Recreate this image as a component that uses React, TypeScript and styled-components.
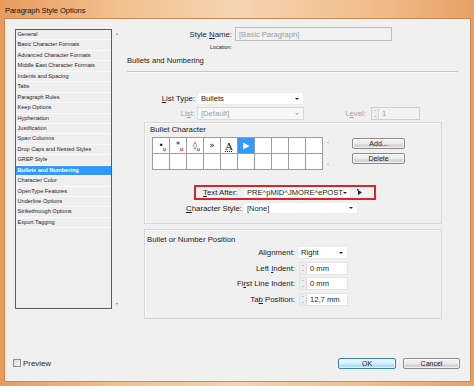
import styled, { createGlobalStyle } from "styled-components";

const GlobalStyle = createGlobalStyle`
  html, body {
    margin: 0;
    padding: 0;
  }
  body {
    width: 474px;
    height: 386px;
    overflow: hidden;
    background: #eaa56b;
    font-family: "Liberation Sans", Arial, sans-serif;
    color: #1c1c1c;
  }
`;

const Window = styled.div`
  width: 474px;
  height: 386px;
  box-sizing: border-box;
  padding: 0 4px 5px 5px;
  display: flex;
  flex-direction: column;
  background: linear-gradient(90deg, #e79c5c 0%, #f1c08f 25%, #f6d4b0 50%, #f0bd8c 78%, #e8a163 100%);
`;

const TitleBar = styled.div`
  height: 19px;
  flex-shrink: 0;
  display: flex;
  align-items: center;
  padding-top: 2px;
  box-sizing: border-box;
  font-size: 7.6px;
  letter-spacing: -0.1px;
  color: #141414;
`;

const Client = styled.div`
  flex: 1;
  display: flex;
  flex-direction: column;
  background: #f0f0f0;
  box-shadow: 0 0 0 1px #c98a55;
`;

const Main = styled.div`
  flex: 1;
  display: flex;
`;

const Sidebar = styled.div`
  width: 120px;
  flex-shrink: 0;
  display: flex;
  align-items: flex-start;
  padding: 10px 0 0 10px;
  box-sizing: border-box;
`;

const ListBox = styled.div`
  width: 97px;
  height: 280px;
  box-sizing: border-box;
  border: 1px solid #5c5c5c;
  background: #efefef;
  overflow: hidden;
`;

const ListItem = styled.div<{ $selected?: boolean }>`
  height: 10.44px;
  box-sizing: border-box;
  border-bottom: 1px solid #fafafa;
  padding-left: 1.5px;
  font-size: 5.6px;
  line-height: 9.6px;
  white-space: nowrap;
  background: ${(p) => (p.$selected ? "#3399ff" : "transparent")};
  color: ${(p) => (p.$selected ? "#ffffff" : "#222")};
  font-weight: ${(p) => (p.$selected ? 700 : 400)};
`;

const ScrollCol = styled.div<{ $h: number; $pad: number }>`
  width: 10px;
  height: ${(p) => p.$h}px;
  box-sizing: border-box;
  padding: ${(p) => p.$pad}px 0;
  display: flex;
  flex-direction: column;
  align-items: center;
  justify-content: space-between;
`;

const Tri = styled.span<{ $dir: "up" | "down"; $color?: string; $size?: number }>`
  width: 0;
  height: 0;
  border-left: ${(p) => p.$size ?? 2}px solid transparent;
  border-right: ${(p) => p.$size ?? 2}px solid transparent;
  ${(p) =>
    p.$dir === "up"
      ? `border-bottom: ${(p.$size ?? 2) + 0.5}px solid ${p.$color ?? "#8a8a8a"};`
      : `border-top: ${(p.$size ?? 2) + 0.5}px solid ${p.$color ?? "#8a8a8a"};`}
`;

const Content = styled.div`
  flex: 1;
  display: flex;
  flex-direction: column;
  padding-top: 8px;
`;

const Row = styled.div<{ $top?: number; $h?: number; $left?: number }>`
  display: flex;
  align-items: center;
  flex-shrink: 0;
  margin-top: ${(p) => p.$top ?? 0}px;
  margin-left: ${(p) => p.$left ?? 0}px;
  height: ${(p) => p.$h ?? 13}px;
`;

const Label = styled.span<{ $w: number; $size?: number; $disabled?: boolean; $gap?: number }>`
  width: ${(p) => p.$w}px;
  flex-shrink: 0;
  box-sizing: border-box;
  padding-right: ${(p) => p.$gap ?? 2}px;
  text-align: right;
  white-space: nowrap;
  font-size: ${(p) => p.$size ?? 7.8}px;
  color: ${(p) => (p.$disabled ? "#a3a3a3" : "#1c1c1c")};
`;

const Field = styled.div<{ $w: number; $kind?: "plain" | "white" | "disabled" }>`
  width: ${(p) => p.$w}px;
  height: 100%;
  flex-shrink: 0;
  box-sizing: border-box;
  display: flex;
  align-items: center;
  justify-content: space-between;
  padding: 0 4px 0 3px;
  font-size: 7.6px;
  white-space: nowrap;
  overflow: hidden;
  background: ${(p) => (p.$kind === "plain" ? "#f1f1f1" : p.$kind === "disabled" ? "#f7f7f7" : "#ffffff")};
  border: 1px solid ${(p) => (p.$kind === "plain" ? "#bdbdbd" : p.$kind === "disabled" ? "#dadada" : "#ececec")};
  color: ${(p) => (p.$kind === "white" || !p.$kind ? "#1c1c1c" : "#9d9d9d")};
`;

const Spinner = styled.div<{ $w: number; $left?: number; $disabled?: boolean }>`
  width: ${(p) => p.$w}px;
  height: 100%;
  margin-left: ${(p) => p.$left ?? 0}px;
  flex-shrink: 0;
  box-sizing: border-box;
  display: flex;
  border: 1px solid ${(p) => (p.$disabled ? "#cfcfcf" : "#e4e4e4")};
  background: ${(p) => (p.$disabled ? "#f3f3f3" : "#ffffff")};
  font-size: 7.6px;
  color: ${(p) => (p.$disabled ? "#9d9d9d" : "#1c1c1c")};
`;

const SpinArrows = styled.div`
  width: 6px;
  flex-shrink: 0;
  display: flex;
  flex-direction: column;
  align-items: center;
  justify-content: space-around;
  background: #ededed;
  border-right: 1px solid #d8d8d8;
`;

const SpinValue = styled.span`
  display: flex;
  align-items: center;
  padding-left: 3px;
`;

const Heading = styled.div`
  margin: 6px 0 0 2px;
  height: 10px;
  line-height: 10px;
  font-size: 7.6px;
`;

const Separator = styled.div`
  margin: 5px 0 0 2px;
  width: 331px;
  height: 1px;
  background: #c4c4c4;
  border-bottom: 1px solid #fbfbfb;
`;

const Group = styled.div<{ $top: number; $h: number }>`
  margin: ${(p) => p.$top}px 0 0 19px;
  width: 298px;
  height: ${(p) => p.$h}px;
  box-sizing: border-box;
  border: 1px solid #d7d7d7;
  box-shadow: inset 1px 1px 0 #fafafa;
  display: flex;
  flex-direction: column;
`;

const GroupTitle = styled.div<{ $left: number; $top: number }>`
  margin: ${(p) => p.$top}px 0 0 ${(p) => p.$left}px;
  height: 9px;
  line-height: 9px;
  font-size: 7.8px;
`;

const GlyphGrid = styled.div`
  display: grid;
  grid-template-columns: repeat(10, 16px);
  grid-template-rows: repeat(2, 15px);
  gap: 1px;
  padding: 1px;
  background: #9c9c9c;
  margin-left: 7px;
`;

const Cell = styled.div<{ $selected?: boolean }>`
  position: relative;
  display: flex;
  align-items: center;
  justify-content: center;
  background: ${(p) => (p.$selected ? "#3399ff" : "#ffffff")};
  font-family: "DejaVu Sans", sans-serif;
  font-size: 8px;
  color: #111;
`;

const CellSerif = styled.span`
  font-family: "Liberation Serif", serif;
  font-size: 11px;
  text-decoration: underline dotted;
`;

const RedMark = styled.span`
  position: absolute;
  left: 10px;
  top: 8px;
  font-family: "Liberation Sans", sans-serif;
  font-size: 5px;
  font-weight: 700;
  color: #d8262c;
`;

const SideButtons = styled.div`
  display: flex;
  flex-direction: column;
  gap: 4px;
  margin-left: 19px;
  align-self: flex-start;
  padding-top: 0.7px;
`;

const Button = styled.div<{ $w: number; $primary?: boolean }>`
  width: ${(p) => p.$w}px;
  height: 11px;
  box-sizing: border-box;
  display: flex;
  align-items: center;
  justify-content: center;
  font-size: 7px;
  color: #1a1a1a;
  border-radius: 2px;
  border: 1px solid ${(p) => (p.$primary ? "#3c7fb1" : "#8a8a8a")};
  background: ${(p) =>
    p.$primary
      ? "linear-gradient(180deg, #eaf6fd 0%, #d9f0fc 50%, #bee6fd 51%, #a7d9f5 100%)"
      : "linear-gradient(180deg, #f3f3f3 0%, #ebebeb 50%, #dddddd 51%, #cfcfcf 100%)"};
  box-shadow: inset 0 0 0 1px rgba(255, 255, 255, 0.7);
`;

const RedBox = styled.div`
  margin: 15px 0 0 49px;
  width: 182px;
  height: 15px;
  box-sizing: border-box;
  border: 2px solid #d4262d;
  display: flex;
  align-items: center;
  padding-left: 7px;
`;

const InlineLabel = styled.span`
  width: 40px;
  flex-shrink: 0;
  font-size: 7.8px;
  white-space: nowrap;
`;

const Flyout = styled.svg`
  margin-left: 6px;
  flex-shrink: 0;
`;

const Footer = styled.div`
  height: 31px;
  box-sizing: border-box;
  padding: 0 10px 5px 8px;
  display: flex;
  align-items: center;
  justify-content: space-between;
`;

const Check = styled.label`
  display: flex;
  align-items: center;
  gap: 2px;
  font-size: 7.9px;
  color: #2a2a2a;
`;

const Box = styled.span`
  width: 8px;
  height: 8px;
  box-sizing: border-box;
  border: 1px solid #8f8f8f;
  background: linear-gradient(135deg, #d9d9d9, #f7f7f7);
`;

const Actions = styled.div`
  display: flex;
  gap: 7px;
`;

const sections = [
  "General",
  "Basic Character Formats",
  "Advanced Character Formats",
  "Middle East Character Formats",
  "Indents and Spacing",
  "Tabs",
  "Paragraph Rules",
  "Keep Options",
  "Hyphenation",
  "Justification",
  "Span Columns",
  "Drop Caps and Nested Styles",
  "GREP Style",
  "Bullets and Numbering",
  "Character Color",
  "OpenType Features",
  "Underline Options",
  "Strikethrough Options",
  "Export Tagging",
];

const glyphs: { ch?: string; mark?: boolean; serif?: boolean; selected?: boolean }[] = [
  { ch: "•", mark: true },
  { ch: "*", mark: true },
  { ch: "◊", mark: true },
  { ch: "»" },
  { ch: "A", serif: true },
  { selected: true },
];

function Spin({ value, w, left, disabled }: { value: string; w: number; left?: number; disabled?: boolean }) {
  return (
    <Spinner $w={w} $left={left} $disabled={disabled}>
      <SpinArrows>
        <Tri $dir="up" $size={1.3} $color="#9a9a9a" />
        <Tri $dir="down" $size={1.3} $color="#9a9a9a" />
      </SpinArrows>
      <SpinValue>{value}</SpinValue>
    </Spinner>
  );
}

export default function App() {
  return (
    <>
      <GlobalStyle />
      <Window>
        <TitleBar>Paragraph Style Options</TitleBar>
        <Client>
          <Main>
            <Sidebar>
              <ListBox>
                {sections.map((s) => (
                  <ListItem key={s} $selected={s === "Bullets and Numbering"}>
                    {s}
                  </ListItem>
                ))}
              </ListBox>
              <ScrollCol $h={280} $pad={4}>
                <Tri $dir="up" $size={1.5} />
                <Tri $dir="down" $size={1.5} />
              </ScrollCol>
            </Sidebar>

            <Content>
              <Row $h={14}>
                <Label $w={110} $gap={3}>
                  Style <u>N</u>ame:
                </Label>
                <Field $w={157} $kind="plain">[Basic Paragraph]</Field>
              </Row>
              <Row $top={3} $h={6}>
                <Label $w={107} $size={5.4} $gap={0}>
                  Location:
                </Label>
              </Row>
              <Heading>Bullets and Numbering</Heading>
              <Separator />

              <Row $top={19}>
                <Label $w={72}>
                  <u>L</u>ist Type:
                </Label>
                <Field $w={107}>
                  Bullets
                  <Tri $dir="down" $color="#222" />
                </Field>
              </Row>
              <Row $top={2}>
                <Label $w={72} $disabled>
                  Li<u>s</u>t:
                </Label>
                <Field $w={107} $kind="disabled">
                  [Default]
                  <Tri $dir="down" $color="#b0b0b0" />
                </Field>
                <Label $w={64} $disabled>
                  L<u>e</u>vel:
                </Label>
                <Spin value="1" w={49} left={3} disabled />
              </Row>

              <Group $top={2} $h={102}>
                <GroupTitle $left={5} $top={2}>
                  Bullet Character
                </GroupTitle>
                <Row $top={3} $h={33}>
                  <GlyphGrid>
                    {Array.from({ length: 20 }).map((_, i) => {
                      const g = glyphs[i];
                      return (
                        <Cell key={i} $selected={g?.selected}>
                          {g?.selected ? (
                            <svg width="8" height="8" viewBox="0 0 8 8">
                              <path d="M1 0.5 L7.5 4 L1 7.5 Z" fill="#fff" />
                            </svg>
                          ) : g?.serif ? (
                            <CellSerif>{g.ch}</CellSerif>
                          ) : (
                            g?.ch
                          )}
                          {g?.mark && <RedMark>u</RedMark>}
                        </Cell>
                      );
                    })}
                  </GlyphGrid>
                  <ScrollCol $h={33} $pad={5}>
                    <Tri $dir="up" $size={1.3} />
                    <Tri $dir="down" $size={1.3} />
                  </ScrollCol>
                  <SideButtons>
                    <Button $w={53}>Add...</Button>
                    <Button $w={53}>Delete</Button>
                  </SideButtons>
                </Row>

                <RedBox>
                  <InlineLabel>
                    <u>T</u>ext After:
                  </InlineLabel>
                  <Field $w={108} style={{ height: 11 }}>
                    PRE^pMID^JMORE^ePOST
                    <Tri $dir="down" $color="#222" />
                  </Field>
                  <Flyout width="6" height="7" viewBox="0 0 6 7">
                    <path d="M1 1 L5 3.5 L1 6 Z" fill="#222" />
                    <rect x="0" y="0" width="1.5" height="1.5" fill="#222" />
                  </Flyout>
                </RedBox>

                <Row $top={2} $h={12}>
                  <Label $w={98} $gap={1}>
                    <u>C</u>haracter Style:
                  </Label>
                  <Field $w={115}>
                    [None]
                    <Tri $dir="down" $color="#222" />
                  </Field>
                </Row>
              </Group>

              <Group $top={5} $h={90}>
                <GroupTitle $left={2} $top={5}>
                  Bullet or Number Position
                </GroupTitle>
                <Row $top={2}>
                  <Label $w={152}>Alignment:</Label>
                  <Field $w={51}>
                    Right
                    <Tri $dir="down" $color="#222" />
                  </Field>
                </Row>
                <Row $top={2.6}>
                  <Label $w={152}>
                    Left <u>I</u>ndent:
                  </Label>
                  <Spin value="0 mm" w={49} left={2} />
                </Row>
                <Row $top={2.6}>
                  <Label $w={152}>
                    Fi<u>r</u>st Line Indent:
                  </Label>
                  <Spin value="0 mm" w={49} left={2} />
                </Row>
                <Row $top={2.6}>
                  <Label $w={152}>
                    Ta<u>b</u> Position:
                  </Label>
                  <Spin value="12,7 mm" w={49} left={2} />
                </Row>
              </Group>
            </Content>
          </Main>

          <Footer>
            <Check>
              <Box />
              Preview
            </Check>
            <Actions>
              <Button $w={58} $primary>
                OK
              </Button>
              <Button $w={57}>Cancel</Button>
            </Actions>
          </Footer>
        </Client>
      </Window>
    </>
  );
}
